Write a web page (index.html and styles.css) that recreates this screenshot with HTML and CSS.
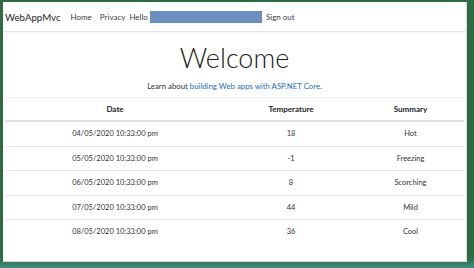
FILE: index.html
```html
<!DOCTYPE html>
<html>
<head>
<meta charset="utf-8">
<link rel="stylesheet" href="styles.css">
</head>
<body>
<div class="window">
  <header class="navbar">
    <span class="brand">WebAppMvc</span>
    <nav class="links">
      <span class="link home">Home</span>
      <span class="link privacy">Privacy</span>
      <span class="link hello">Hello</span>
      <span class="redact"></span>
      <span class="link">Sign out</span>
    </nav>
  </header>
  <main class="content">
    <h1 class="title">Welcome</h1>
    <p class="lead">Learn about <span class="ref">building Web apps with ASP.NET Core</span>.</p>
    <table class="grid">
      <thead>
        <tr><th class="c1">Date</th><th class="c2">Temperature</th><th class="c3">Summary</th></tr>
      </thead>
      <tbody>
        <tr><td>04/05/2020 10:33:00 pm</td><td>18</td><td>Hot</td></tr>
        <tr><td>05/05/2020 10:33:00 pm</td><td>-1</td><td>Freezing</td></tr>
        <tr><td>06/05/2020 10:33:00 pm</td><td>8</td><td>Scorching</td></tr>
        <tr><td>07/05/2020 10:33:00 pm</td><td>44</td><td>Mild</td></tr>
        <tr><td>08/05/2020 10:33:00 pm</td><td>36</td><td>Cool</td></tr>
      </tbody>
    </table>
  </main>
</div>
</body>
</html>
```
FILE: styles.css
```css
html, body {
  margin: 0;
  padding: 0;
  width: 474px;
  height: 268px;
  overflow: hidden;
}
body {
  background: linear-gradient(to bottom, #2f6a42 0%, #2f6a42 96%, #3d8a80 100%);
  font-family: "Lato", "Open Sans", sans-serif;
  color: #212529;
}
.window {
  margin: 2px 7px 0 3px;
  height: 260px;
  background: #fff;
  border-right: 1px solid #d8dcd8;
  border-bottom: 1px solid #cfe0d0;
  box-sizing: border-box;
  overflow: hidden;
}
.navbar {
  height: 29px;
  display: flex;
  align-items: center;
  border-bottom: 1px solid #e6e6e6;
  box-shadow: 0 1px 2px rgba(0,0,0,0.05);
  padding-left: 2px;
}
.brand {
  font-size: 9.7px;
  color: #212529;
}
.links {
  display: flex;
  align-items: center;
  margin-left: 10px;
}
.link {
  font-size: 8px;
  color: #3d3d3d;
}
.home { margin-right: 8px; }
.privacy { margin-right: 4px; }
.hello { margin-right: 2px; }
.redact {
  width: 112px;
  height: 12px;
  background: #6c8fc1;
  margin-right: 4px;
}
.content {
  padding: 0 2px;
}
.title {
  margin: 10px 0 0;
  text-align: center;
  font-size: 27px;
  font-weight: 300;
  line-height: 32px;
  color: #222;
}
.lead {
  margin: 5px 0 0;
  text-align: center;
  font-size: 7.8px;
  line-height: 14px;
  color: #333;
}
.ref {
  color: #1b6ec2;
}
.grid {
  margin-top: 4px;
  width: 100%;
  border-collapse: collapse;
  font-size: 7.5px;
  color: #333;
}
.grid th, .grid td {
  text-align: center;
  padding: 0;
}
.grid th {
  height: 22px;
  font-size: 8px;
  font-weight: 700;
  color: #212529;
  border-top: 1px solid #eceeef;
  border-bottom: 2px solid #dee2e6;
}
.grid td {
  height: 23.5px;
  border-bottom: 1px solid #e4e7ea;
}
.grid tbody tr:last-child td {
  border-bottom: none;
}
.c1 { width: 220px; }
.c2 { width: 132px; }
```
